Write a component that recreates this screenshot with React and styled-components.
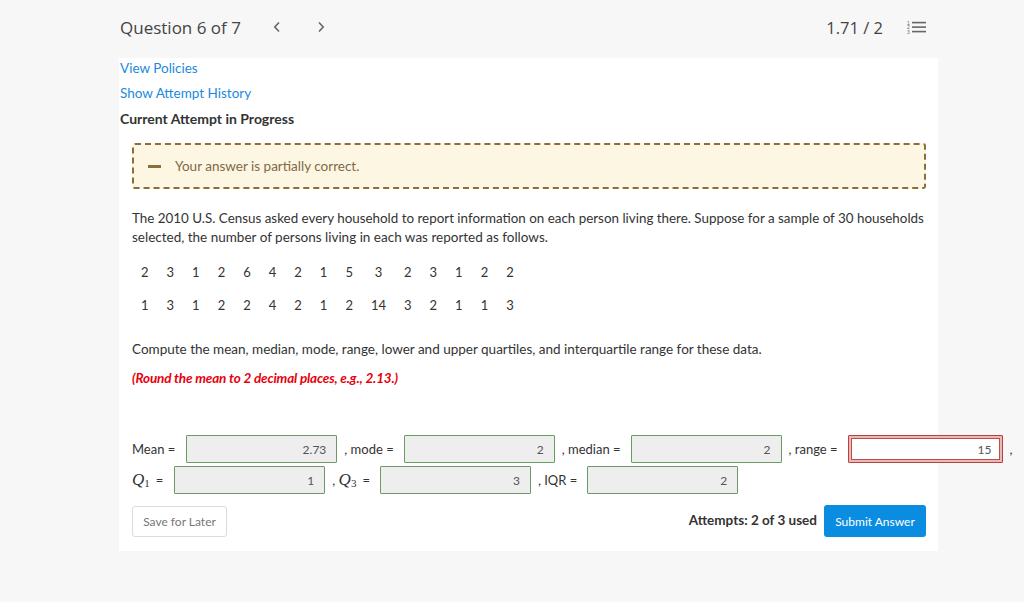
import styled, { createGlobalStyle } from "styled-components";

const GlobalStyle = createGlobalStyle`
  body {
    margin: 0;
    background: #f7f7f7;
    font-family: Lato, "Liberation Sans", sans-serif;
    color: #333;
  }
`;

const rows = [
  [2, 3, 1, 2, 6, 4, 2, 1, 5, 3, 2, 3, 1, 2, 2],
  [1, 3, 1, 2, 2, 4, 2, 1, 2, 14, 3, 2, 1, 1, 3],
];

export default function App() {
  return (
    <>
      <GlobalStyle />
      <Page>
        <Header>
          <Title>Question 6 of 7</Title>
          <NavButton>
            <svg width="8" height="12" viewBox="0 0 8 12">
              <path d="M6 1.5 L1.8 6 L6 10.5" fill="none" stroke="#666" strokeWidth="1.6" />
            </svg>
          </NavButton>
          <NavButton>
            <svg width="8" height="12" viewBox="0 0 8 12">
              <path d="M2 1.5 L6.2 6 L2 10.5" fill="none" stroke="#666" strokeWidth="1.6" />
            </svg>
          </NavButton>
          <Spacer />
          <Score>1.71 / 2</Score>
          <ListIcon>
            <svg width="19" height="14" viewBox="0 0 19 14">
              <text x="0" y="4.5" fontSize="5" fill="#666" fontFamily="Liberation Sans">1</text>
              <text x="0" y="9" fontSize="5" fill="#666" fontFamily="Liberation Sans">2</text>
              <text x="0" y="13.5" fontSize="5" fill="#666" fontFamily="Liberation Sans">3</text>
              <rect x="5" y="1.8" width="14" height="1.6" fill="#666" />
              <rect x="5" y="6.3" width="14" height="1.6" fill="#666" />
              <rect x="5" y="10.8" width="14" height="1.6" fill="#666" />
            </svg>
          </ListIcon>
        </Header>

        <Panel>
          <LinkLine>View Policies</LinkLine>
          <LinkLine>Show Attempt History</LinkLine>
          <StatusLine>Current Attempt in Progress</StatusLine>

          <Question>
            <Alert>
              <MinusMark />
              Your answer is partially correct.
            </Alert>

            <Text>
              <NoWrap>
                The 2010 U.S. Census asked every household to report information on each person living there. Suppose for a sample of 30 households
              </NoWrap>{" "}
              selected, the number of persons living in each was reported as follows.
            </Text>

            <DataTable>
              <tbody>
                {rows.map((r, i) => (
                  <tr key={i}>
                    {r.map((v, j) => (
                      <td key={j}>{v}</td>
                    ))}
                  </tr>
                ))}
              </tbody>
            </DataTable>

            <Text $top={19}>
              Compute the mean, median, mode, range, lower and upper quartiles, and interquartile range for these data.
            </Text>
            <Hint>(Round the mean to 2 decimal places, e.g., 2.13.)</Hint>

            <AnswerRow $top={47}>
              <Label $first>Mean =</Label>
              <Answer>2.73</Answer>
              <Label>, mode =</Label>
              <Answer>2</Answer>
              <Label>, median =</Label>
              <Answer>2</Answer>
              <Label>, range =</Label>
              <Answer $wrong>15</Answer>
              <Label>,</Label>
            </AnswerRow>
            <AnswerRow $top={3}>
              <Label $first>
                <MathQ>Q<sub>1</sub></MathQ>=
              </Label>
              <Answer>1</Answer>
              <Label>
                , <MathQ>Q<sub>3</sub></MathQ>=
              </Label>
              <Answer>3</Answer>
              <Label>, IQR =</Label>
              <Answer>2</Answer>
            </AnswerRow>

            <Footer>
              <SaveButton>Save for Later</SaveButton>
              <Spacer />
              <Attempts>Attempts: 2 of 3 used</Attempts>
              <SubmitButton>Submit Answer</SubmitButton>
            </Footer>
          </Question>
        </Panel>
      </Page>
    </>
  );
}

const Page = styled.div`
  margin-left: 119px;
  width: 819px;
`;

const Header = styled.div`
  height: 58px;
  display: flex;
  align-items: center;
  padding-bottom: 4px;
  box-sizing: border-box;
  font-family: "Open Sans", "Liberation Sans", sans-serif;
  color: #444;
`;

const Title = styled.div`
  font-size: 17px;
  margin-left: 1px;
  margin-right: 32px;
`;

const NavButton = styled.div`
  width: 8px;
  height: 12px;
  display: flex;
  margin-right: 36px;
`;

const Spacer = styled.div`
  flex: 1;
`;

const Score = styled.div`
  font-size: 16.5px;
  margin-right: 24px;
`;

const ListIcon = styled.div`
  display: flex;
  margin-right: 12px;
`;

const Panel = styled.div`
  background: #fff;
  padding-bottom: 14px;
`;

const LinkLine = styled.div`
  font-size: 13.5px;
  line-height: 20px;
  color: #1a8ae0;
  margin-left: 1px;
  margin-bottom: 5px;
`;

const StatusLine = styled(LinkLine)`
  color: #333;
  font-size: 14px;
  font-weight: 700;
  margin-top: 6px;
  margin-bottom: 0;
`;

const Question = styled.div`
  padding: 0 12px 0 13px;
`;

const Alert = styled.div`
  margin-top: 14px;
  height: 46px;
  box-sizing: border-box;
  border: 2px dashed #8c6e3c;
  border-radius: 3px;
  background: #fdf6e3;
  display: flex;
  align-items: center;
  padding-left: 14px;
  font-size: 13.5px;
  color: #7d6a45;
`;

const MinusMark = styled.span`
  width: 13px;
  height: 3px;
  background: #8c6e3c;
  margin-right: 14px;
`;

const Text = styled.p`
  margin: ${(p) => p.$top ?? 20}px 0 0;
  font-size: 13.5px;
  line-height: 19px;
  color: #333;
`;

const NoWrap = styled.span`
  white-space: nowrap;
  font-size: 13.4px;
`;

const DataTable = styled.table`
  margin-top: 8px;
  border-collapse: collapse;
  font-size: 13px;
  color: #333;

  td {
    height: 33px;
    padding: 0 9px;
    text-align: center;
  }
`;

const Hint = styled.p`
  margin: 10px 0 0;
  font-size: 13.5px;
  line-height: 19px;
  font-style: italic;
  font-weight: 700;
  color: #e8000b;
  letter-spacing: -0.15px;
`;

const AnswerRow = styled.div`
  margin-top: ${(p) => p.$top}px;
  display: flex;
  align-items: center;
  white-space: nowrap;
  font-size: 13px;
  color: #333;
`;

const Label = styled.span`
  flex-shrink: 0;
  padding: ${(p) => (p.$first ? "0 11px 0 0" : "0 10px 0 7px")};
`;

const MathQ = styled.span`
  font-family: "Liberation Serif", serif;
  font-style: italic;
  font-size: 17px;
  color: #333;
  margin-right: 6px;

  sub {
    font-style: normal;
    font-size: 11px;
    vertical-align: -2px;
  }
`;

const Answer = styled.div`
  flex-shrink: 0;
  width: ${(p) => (p.$wrong ? 155 : 151)}px;
  height: 28px;
  box-sizing: border-box;
  border: 1px solid ${(p) => (p.$wrong ? "#b5423f" : "#6a9b62")};
  box-shadow: ${(p) => (p.$wrong ? "inset 0 0 0 2px #e9b9b9, inset 0 0 0 3px #c24a47" : "none")};
  background: ${(p) => (p.$wrong ? "#fff" : "#eeeeee")};
  border-radius: 1px;
  display: flex;
  align-items: center;
  justify-content: flex-end;
  padding-right: 10px;
  font-size: 12px;
  color: #555;
`;

const Footer = styled.div`
  margin-top: 11px;
  display: flex;
  align-items: center;
`;

const SaveButton = styled.div`
  width: 95px;
  height: 31px;
  box-sizing: border-box;
  border: 1px solid #dcdcdc;
  border-radius: 3px;
  background: #fff;
  display: flex;
  align-items: center;
  justify-content: center;
  font-size: 12px;
  color: #777;
`;

const Attempts = styled.div`
  font-size: 13.5px;
  font-weight: 700;
  color: #333;
  margin-right: 7px;
  margin-top: -2px;
`;

const SubmitButton = styled.div`
  width: 102px;
  height: 32px;
  border-radius: 3px;
  background: #0a8de0;
  color: #fff;
  font-size: 12px;
  display: flex;
  align-items: center;
  justify-content: center;
`;
